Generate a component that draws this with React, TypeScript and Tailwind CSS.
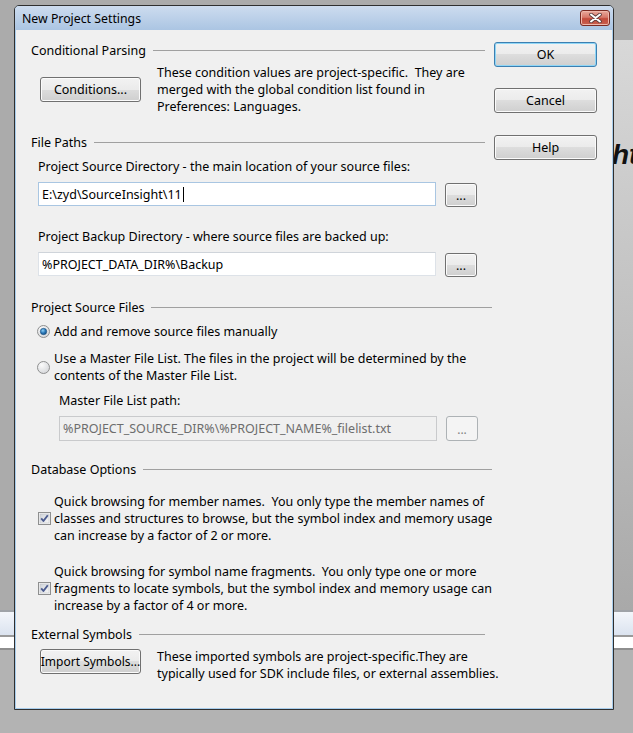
import React from "react";

const BTN =
  "flex shrink-0 items-center justify-center whitespace-nowrap rounded-[3px] border border-[#707070] shadow-[inset_0_0_0_1px_#fbfbfb] bg-[linear-gradient(to_bottom,#f2f2f2_0%,#ebebeb_50%,#dddddd_50%,#cfcfcf_100%)] text-[12.5px] leading-[17px] text-black";
const BTN_DEFAULT =
  "flex shrink-0 items-center justify-center whitespace-nowrap rounded-[3px] border border-[#3c7fb1] shadow-[inset_0_0_0_1px_#8fd6f6] bg-[linear-gradient(to_bottom,#f2f2f2_0%,#ebebeb_50%,#dddddd_50%,#cfcfcf_100%)] text-[12.5px] leading-[17px] text-black";
const BTN_DISABLED =
  "flex shrink-0 items-center justify-center rounded-[3px] border border-[#adb2b5] bg-[#f4f4f4] text-[12px] leading-[17px] text-[#838383]";

function SectionHeader({ title, wide }: { title: string; wide?: boolean }) {
  return (
    <div className={`flex h-[17px] items-center ${wide ? "w-[461px]" : "w-[454px]"}`}>
      <span className="whitespace-nowrap leading-[17px]">{title}</span>
      <div className="ml-[7px] h-px flex-1 bg-[#a0a0a0]" />
    </div>
  );
}

function Radio({ checked }: { checked?: boolean }) {
  return (
    <svg width="13" height="13" viewBox="0 0 13 13" className="shrink-0">
      <defs>
        <radialGradient id={checked ? "rf1" : "rf2"} cx="0.35" cy="0.3" r="0.8">
          <stop offset="0" stopColor="#fbfbfb" />
          <stop offset="1" stopColor="#d3d5d8" />
        </radialGradient>
        <radialGradient id="dot" cx="0.4" cy="0.35" r="0.7">
          <stop offset="0" stopColor="#8dd0f7" />
          <stop offset="0.55" stopColor="#2a78b8" />
          <stop offset="1" stopColor="#114f84" />
        </radialGradient>
      </defs>
      <circle cx="6.5" cy="6.5" r="6" fill={`url(#${checked ? "rf1" : "rf2"})`} stroke="#8e8f8f" strokeWidth="1" />
      {checked && <circle cx="6.5" cy="6.5" r="3.2" fill="url(#dot)" stroke="#1d4f7d" strokeWidth="0.6" />}
    </svg>
  );
}

function Check() {
  return (
    <svg width="13" height="13" viewBox="0 0 13 13" className="shrink-0">
      <defs>
        <linearGradient id="cbg" x1="0" y1="0" x2="1" y2="1">
          <stop offset="0" stopColor="#cfd3d8" />
          <stop offset="1" stopColor="#f7f7f7" />
        </linearGradient>
      </defs>
      <rect x="0.5" y="0.5" width="12" height="12" fill="#f4f4f4" stroke="#8e8f8f" />
      <rect x="2" y="2" width="9" height="9" fill="url(#cbg)" stroke="#b9bcc1" strokeWidth="0.5" />
      <path d="M3.2 6.4 L5.4 9 L9.8 3.2" fill="none" stroke="#4b5b8f" strokeWidth="1.9" strokeLinejoin="round" />
    </svg>
  );
}

export default function App() {
  return (
    <div className="relative h-[733px] w-[633px] overflow-hidden bg-[#ababab] font-['Noto_Sans',sans-serif] text-[12.5px] text-black">
      {/* background application pieces */}
      <div className="absolute left-[614px] top-[40px] h-[570px] w-[19px] bg-[linear-gradient(to_bottom,#d8d8d8,#a9a9a9)]" />
      <div className="absolute left-[612px] top-[138px] font-['Liberation_Sans',sans-serif] text-[28px] font-bold italic leading-[34px] text-[#111]">
        ht
      </div>
      <div className="absolute left-0 top-[610px] flex h-[40px] w-[633px] flex-col">
        <div className="h-[2px] bg-[#9fa3a8]" />
        <div className="h-[23px] bg-[linear-gradient(to_bottom,#f3f6fb,#dbe3ef)]" />
        <div className="h-[2px] bg-[#9a9a9a]" />
        <div className="h-[11px] bg-white" />
        <div className="h-[2px] bg-[#8e8e8e]" />
      </div>
      <div className="absolute left-0 top-[650px] h-[83px] w-[633px] bg-[#b3b3b3]" />

      {/* dialog window */}
      <div className="absolute left-[14px] top-[5px] flex h-[705px] w-[600px] flex-col rounded-t-[5px] border border-[#2f2f2f] bg-[#a8cdec]">
        <div className="flex h-[24px] items-center justify-between rounded-t-[4px] bg-[linear-gradient(to_bottom,#cddcef,#abc5e3)] pl-[7px] pr-[3px]">
          <span className="text-[12.3px] leading-[17px] text-black">New Project Settings</span>
          <div className="flex h-[16px] w-[30px] items-center justify-center rounded-[3px] border border-[#7a2a22] bg-[linear-gradient(to_bottom,#e9a99c_0%,#d7786a_45%,#c24a3b_55%,#c8604f_100%)] shadow-[inset_0_0_0_1px_#efb7ab]">
            <svg width="13" height="10" viewBox="0 0 13 10">
              <path d="M2 1.5 L11 8.5 M11 1.5 L2 8.5" stroke="#5a3a3a" strokeWidth="3.6" strokeLinecap="round" />
              <path d="M2 1.5 L11 8.5 M11 1.5 L2 8.5" stroke="#ffffff" strokeWidth="2" strokeLinecap="round" />
            </svg>
          </div>
        </div>

        <div className="mx-px mb-px flex h-[678px] bg-[#f0f0f0]">
          {/* left column */}
          <div className="flex w-[478px] flex-col pl-[15px] pt-[12px]">
            <SectionHeader title="Conditional Parsing" />
            <div className="mt-[5px] flex items-center">
              <div className={`${BTN} ml-[9px] h-[25px] w-[101px]`}>Conditions...</div>
              <div className="ml-[16px] whitespace-nowrap leading-[17px]">
                These condition values are project-specific.{"\u00a0"} They are
                <br />
                merged with the global condition list found in
                <br />
                Preferences: Languages.
              </div>
            </div>

            <div className="mt-[19px]">
              <SectionHeader title="File Paths" />
            </div>
            <div className="ml-[7px] mt-[7px] whitespace-nowrap leading-[17px]">
              Project Source Directory - the main location of your source files:
            </div>
            <div className="ml-[7px] mt-[7px] flex items-start">
              <div className="flex h-[24px] w-[398px] shrink-0 items-center border border-[#a9c6e2] bg-white pl-[3px]">
                <span className="leading-[17px]">E:\zyd\SourceInsight\11</span>
                <span className="ml-px h-[15px] w-px bg-black" />
              </div>
              <div className={`${BTN} ml-[9px] mt-px h-[24px] w-[32px] items-end pb-[2px] text-[10px] leading-[12px]`}>...</div>
            </div>
            <div className="ml-[7px] mt-[21px] whitespace-nowrap leading-[17px]">
              Project Backup Directory - where source files are backed up:
            </div>
            <div className="ml-[7px] mt-[7px] flex items-start">
              <div className="flex h-[24px] w-[398px] shrink-0 items-center border border-[#dde2e8] border-t-[#cfd4da] bg-white pl-[3px]">
                <span className="leading-[17px]">%PROJECT_DATA_DIR%\Backup</span>
              </div>
              <div className={`${BTN} ml-[9px] mt-px h-[24px] w-[32px] items-end pb-[2px] text-[10px] leading-[12px]`}>...</div>
            </div>

            <div className="mt-[22px]">
              <SectionHeader title="Project Source Files" wide />
            </div>
            <div className="ml-[6px] mt-[7px] flex items-center">
              <Radio checked />
              <span className="ml-[4px] whitespace-nowrap leading-[17px]">Add and remove source files manually</span>
            </div>
            <div className="ml-[6px] mt-[10px] flex items-center">
              <Radio />
              <span className="ml-[4px] whitespace-nowrap leading-[17px]">
                Use a Master File List. The files in the project will be determined by the
                <br />
                contents of the Master File List.
              </span>
            </div>
            <div className="ml-[28px] mt-[8px] leading-[17px]">Master File List path:</div>
            <div className="ml-[28px] mt-[7px] flex items-start">
              <div className="flex h-[25px] w-[378px] shrink-0 items-center border border-[#c9cacc] bg-[#f0f0f0] pl-[3px] text-[#6d6d6d]">
                <span className="whitespace-nowrap leading-[17px]">%PROJECT_SOURCE_DIR%\%PROJECT_NAME%_filelist.txt</span>
              </div>
              <div className={`${BTN_DISABLED} ml-[9px] h-[25px] w-[32px] items-end pb-[2px] text-[10px] leading-[12px]`}>...</div>
            </div>

            <div className="mt-[20px]">
              <SectionHeader title="Database Options" wide />
            </div>
            <div className="ml-[7px] mt-[15px] flex items-center">
              <Check />
              <span className="ml-[3px] whitespace-nowrap leading-[17px]">
                Quick browsing for member names.{"\u00a0"} You only type the member names of
                <br />
                classes and structures to browse, but the symbol index and memory usage
                <br />
                can increase by a factor of 2 or more.
              </span>
            </div>
            <div className="ml-[7px] mt-[19px] flex items-center">
              <Check />
              <span className="ml-[3px] whitespace-nowrap leading-[17px]">
                Quick browsing for symbol name fragments.{"\u00a0"} You only type one or more
                <br />
                fragments to locate symbols, but the symbol index and memory usage can
                <br />
                increase by a factor of 4 or more.
              </span>
            </div>

            <div className="mt-[12px]">
              <SectionHeader title="External Symbols" />
            </div>
            <div className="mt-[5px] flex items-start">
              <div className={`${BTN} ml-[9px] mt-px h-[25px] w-[101px] text-[12px]`}>Import Symbols...</div>
              <div className="ml-[16px] whitespace-nowrap leading-[17px]">
                These imported symbols are project-specific.They are
                <br />
                typically used for SDK include files, or external assemblies.
              </div>
            </div>
          </div>

          {/* right column */}
          <div className="flex w-[103px] flex-col pt-[12px]">
            <div className={`${BTN_DEFAULT} h-[25px] w-[103px]`}>OK</div>
            <div className={`${BTN} mt-[21px] h-[25px] w-[103px]`}>Cancel</div>
            <div className={`${BTN} mt-[22px] h-[25px] w-[103px]`}>Help</div>
          </div>
        </div>
      </div>
    </div>
  );
}
